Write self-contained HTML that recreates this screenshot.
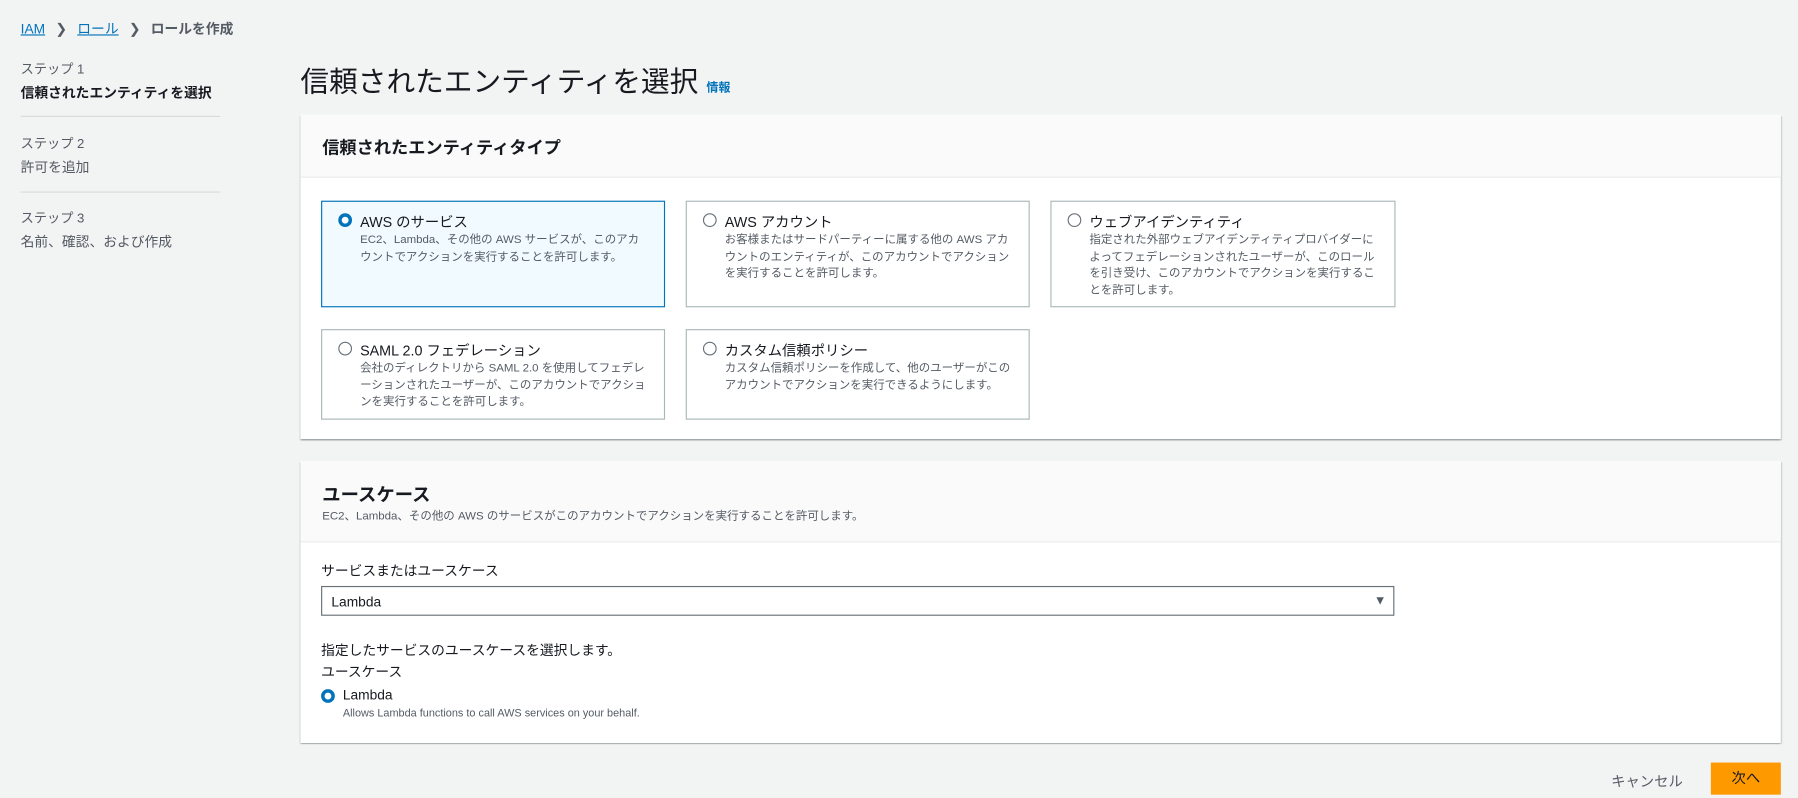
<!DOCTYPE html>
<html><head><meta charset="utf-8"><style>
*{box-sizing:border-box;margin:0;padding:0}
html,body{width:1798px;height:798px;overflow:hidden;background:#f2f3f3}
#w{position:absolute;left:0;top:0;width:1568px;height:696px;transform:scale(1.1467);transform-origin:0 0;font-family:"Liberation Sans","Noto Sans CJK JP",sans-serif;color:#16191f}
.a{position:absolute;white-space:nowrap}
.lnk{color:#0073bb;text-decoration:underline}
.g{color:#545b64}
.card{position:absolute;background:#fff;box-shadow:0 1px 1px rgba(0,28,36,.3),1px 1px 1px rgba(0,28,36,.15),-1px 1px 1px rgba(0,28,36,.15)}
.hd{position:absolute;left:0;right:0;top:0;background:#fafafa;border-bottom:1px solid #eaeded}
.tile{position:absolute;border:1px solid #aab7b8;background:#fff}
.tile.sel{border-color:#0073bb;background:#f1faff}
.rad{position:absolute;width:12px;height:12px;border-radius:50%;border:1px solid #687078;background:#fff}
.rad.on{border:3.5px solid #0073bb}
.tt{position:absolute;left:33px;top:7px;font-size:12.5px}
.td{position:absolute;left:33px;top:27px;font-size:10px;line-height:14.5px;color:#545b64;white-space:normal;width:252px}
</style></head><body><div id="w">
<div class="a" style="left:18px;top:16px;font-size:12px"><span class="lnk">IAM</span><span class="g" style="margin:0 9px">&#10095;</span><span class="lnk">ロール</span><span class="g" style="margin:0 9px">&#10095;</span><span style="color:#545b64;font-weight:bold">ロールを作成</span></div>

<div class="a g" style="left:18px;top:52px;font-size:11.5px">ステップ 1</div>
<div class="a" style="left:18px;top:72px;font-size:12px;font-weight:bold">信頼されたエンティティを選択</div>
<div class="a" style="left:18px;top:101px;width:174px;height:1px;background:#d5dbdb"></div>
<div class="a g" style="left:18px;top:117px;font-size:11.5px">ステップ 2</div>
<div class="a g" style="left:18px;top:137px;font-size:12px">許可を追加</div>
<div class="a" style="left:18px;top:167px;width:174px;height:1px;background:#d5dbdb"></div>
<div class="a g" style="left:18px;top:182px;font-size:11.5px">ステップ 3</div>
<div class="a g" style="left:18px;top:202px;font-size:12px">名前、確認、および作成</div>

<div class="a" style="left:262px;top:52px;font-size:25px">信頼されたエンティティを選択 <span style="font-size:10.5px;font-weight:bold;color:#0073bb">情報</span></div>

<div class="card" style="left:262px;top:100px;width:1291px;height:283px">
 <div class="hd" style="height:55px"></div>
 <div class="a" style="left:19px;top:18px;font-size:15px;font-weight:bold">信頼されたエンティティタイプ</div>
 <div class="tile sel" style="left:18px;top:75px;width:300px;height:93px"><div class="rad on" style="left:14px;top:10px"></div><div class="tt">AWS のサービス</div><div class="td">EC2、Lambda、その他の AWS サービスが、このアカウントでアクションを実行することを許可します。</div></div>
 <div class="tile" style="left:336px;top:75px;width:300px;height:93px"><div class="rad" style="left:14px;top:10px"></div><div class="tt">AWS アカウント</div><div class="td">お客様またはサードパーティーに属する他の AWS アカウントのエンティティが、このアカウントでアクションを実行することを許可します。</div></div>
 <div class="tile" style="left:654px;top:75px;width:301px;height:93px"><div class="rad" style="left:14px;top:10px"></div><div class="tt">ウェブアイデンティティ</div><div class="td">指定された外部ウェブアイデンティティプロバイダーによってフェデレーションされたユーザーが、このロールを引き受け、このアカウントでアクションを実行することを許可します。</div></div>
 <div class="tile" style="left:18px;top:187px;width:300px;height:79px"><div class="rad" style="left:14px;top:10px"></div><div class="tt">SAML 2.0 フェデレーション</div><div class="td">会社のディレクトリから SAML 2.0 を使用してフェデレーションされたユーザーが、このアカウントでアクションを実行することを許可します。</div></div>
 <div class="tile" style="left:336px;top:187px;width:300px;height:79px"><div class="rad" style="left:14px;top:10px"></div><div class="tt">カスタム信頼ポリシー</div><div class="td">カスタム信頼ポリシーを作成して、他のユーザーがこのアカウントでアクションを実行できるようにします。</div></div>
</div>

<div class="card" style="left:262px;top:402px;width:1291px;height:246px">
 <div class="hd" style="height:71px"></div>
 <div class="a" style="left:19px;top:16px;font-size:16px;font-weight:bold">ユースケース</div>
 <div class="a g" style="left:19px;top:39px;font-size:10px">EC2、Lambda、その他の AWS のサービスがこのアカウントでアクションを実行することを許可します。</div>
 <div class="a" style="left:18px;top:87px;font-size:12px">サービスまたはユースケース</div>
 <div class="a" style="left:18px;top:109px;width:936px;height:26px;border:1px solid #687078;background:#fff"><span class="a" style="left:8px;top:6px;font-size:12px">Lambda</span><span class="a" style="right:6px;top:6px;font-size:11px;color:#545b64">&#9660;</span></div>
 <div class="a" style="left:18px;top:156px;font-size:12px">指定したサービスのユースケースを選択します。</div>
 <div class="a" style="left:18px;top:175px;font-size:12px">ユースケース</div>
 <div class="rad on" style="left:18px;top:199px"></div>
 <div class="a" style="left:37px;top:197px;font-size:12px">Lambda</div>
 <div class="a g" style="left:37px;top:215px;font-size:9.5px">Allows Lambda functions to call AWS services on your behalf.</div>
</div>

<div class="a" style="left:1405px;top:671px;font-size:12.5px;color:#545b64">キャンセル</div>
<div class="a" style="left:1492px;top:665px;width:61px;height:28px;background:#ff9900;font-size:12.5px;text-align:center;line-height:28px">次へ</div>
</div></body></html>
